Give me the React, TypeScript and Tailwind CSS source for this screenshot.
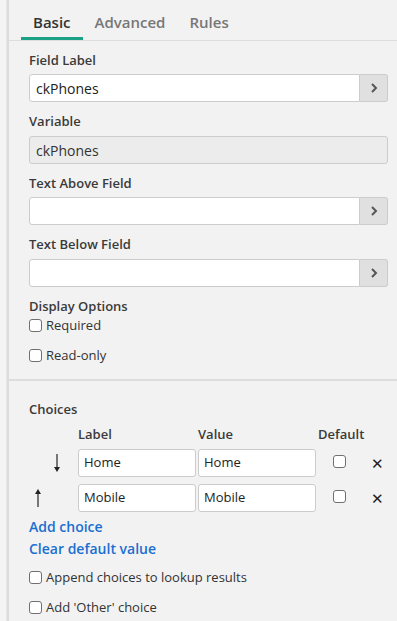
import React from "react";

const font = { fontFamily: '"Open Sans", "Noto Sans", sans-serif' };

function Chevron() {
  return (
    <svg width="10" height="12" viewBox="0 0 10 12" fill="none">
      <path d="M3 2 L7 6 L3 10" stroke="#555" strokeWidth="2" />
    </svg>
  );
}

function ArrowDown() {
  return (
    <svg width="10" height="20" viewBox="0 0 10 20" fill="none">
      <path d="M5 1 L5 16" stroke="#333" strokeWidth="1.3" />
      <path d="M2 14 L5 19 L8 14 Z" fill="#222" />
    </svg>
  );
}

function ArrowUp() {
  return (
    <svg width="10" height="20" viewBox="0 0 10 20" fill="none">
      <path d="M5 4 L5 19" stroke="#333" strokeWidth="1.3" />
      <path d="M2 6 L5 1 L8 6 Z" fill="#222" />
    </svg>
  );
}

function InputWithButton({ value }: { value: string }) {
  return (
    <div className="flex h-[28px]">
      <div className="flex-1 bg-white border border-[#cccccc] rounded-l-[3px] flex items-center px-[6px] text-[14px] text-[#222]">
        {value}
      </div>
      <div className="w-[28px] bg-[#e0e0e0] border border-l-0 border-[#cccccc] rounded-r-[3px] flex items-center justify-center">
        <Chevron />
      </div>
    </div>
  );
}

function Label({ children, className = "" }: { children: React.ReactNode; className?: string }) {
  return (
    <div className={`text-[13px] leading-[18px] font-semibold text-[#3a3a3a] ${className}`}>{children}</div>
  );
}

function Check({ label }: { label?: string }) {
  return (
    <div className="flex items-center gap-[4px]">
      <div className="w-[13px] h-[13px] border border-[#707070] rounded-[3px] bg-white" />
      {label && <span className="text-[13px] leading-[18px] text-[#333]">{label}</span>}
    </div>
  );
}

function SmallInput({ value }: { value: string }) {
  return (
    <div className="h-[28px] w-[118px] bg-white border border-[#cccccc] rounded-[3px] flex items-center px-[5px] text-[13px] text-[#222]">
      {value}
    </div>
  );
}

export default function App() {
  return (
    <div className="w-[397px] h-[621px] bg-[#f2f2f2] flex overflow-hidden" style={font}>
      <div className="w-[7px] bg-[#f4f4f4] border-r border-[#e6e6e6]" />
      <div className="w-[2px] bg-[#dcdcdc]" />
      <div className="flex-1 flex flex-col">
        <div className="h-[41px] border-b border-[#dddddd] flex items-end pl-[12px]">
          <div className="px-[12px] h-[40px] flex items-center text-[15px] font-semibold text-[#333] border-b-[3px] border-[#1ba185] pt-[7px]">
            Basic
          </div>
          <div className="px-[12px] h-[40px] flex items-center text-[15px] font-semibold text-[#777] pt-[4px]">
            Advanced
          </div>
          <div className="px-[12px] h-[40px] flex items-center text-[15px] font-semibold text-[#777] pt-[4px]">
            Rules
          </div>
        </div>
        <div className="pl-[20px] pr-[9px] flex flex-col">
          <Label className="mt-[10px] mb-[5px]">Field Label</Label>
          <InputWithButton value="ckPhones" />
          <Label className="mt-[10px] mb-[6px]">Variable</Label>
          <div className="h-[28px] bg-[#ececec] border border-[#cccccc] rounded-[3px] flex items-center px-[6px] text-[14px] text-[#333]">
            ckPhones
          </div>
          <Label className="mt-[10px] mb-[5px]">Text Above Field</Label>
          <InputWithButton value="" />
          <Label className="mt-[10px] mb-[6px]">Text Below Field</Label>
          <InputWithButton value="" />
          <Label className="mt-[10px]">Display Options</Label>
          <div className="mt-[1px]">
            <Check label="Required" />
          </div>
          <div className="mt-[12px]">
            <Check label="Read-only" />
          </div>
        </div>
        <div className="mt-[15px] border-t-2 border-[#dddddd]" />
        <div className="pl-[20px] pr-[9px] flex flex-col">
          <Label className="mt-[19px]">Choices</Label>
          <div className="flex mt-[7px] h-[18px] items-center">
            <div className="w-[49px]" />
            <Label className="w-[120px]">Label</Label>
            <Label className="w-[120px]">Value</Label>
            <Label>Default</Label>
          </div>
          <div className="flex items-center mt-[6px] h-[28px]">
            <div className="w-[49px] flex justify-end pr-[16px]">
              <ArrowDown />
            </div>
            <SmallInput value="Home" />
            <div className="w-[2px]" />
            <SmallInput value="Home" />
            <div className="w-[17px]" />
            <div className="-mt-[4px]">
              <Check />
            </div>
            <div className="ml-[25px] text-[15px] text-[#222]">✕</div>
          </div>
          <div className="flex items-center mt-[7px] h-[28px]">
            <div className="w-[49px] flex justify-start pl-[4px]">
              <ArrowUp />
            </div>
            <SmallInput value="Mobile" />
            <div className="w-[2px]" />
            <SmallInput value="Mobile" />
            <div className="w-[17px]" />
            <div className="-mt-[4px]">
              <Check />
            </div>
            <div className="ml-[25px] text-[15px] text-[#222]">✕</div>
          </div>
          <div className="mt-[5px] text-[14px] leading-[20px] font-semibold text-[#1a6fd1]">Add choice</div>
          <div className="mt-[2px] text-[14px] leading-[20px] font-semibold text-[#1a6fd1]">Clear default value</div>
          <div className="mt-[9px]">
            <Check label="Append choices to lookup results" />
          </div>
          <div className="mt-[12px]">
            <Check label="Add 'Other' choice" />
          </div>
        </div>
      </div>
    </div>
  );
}
